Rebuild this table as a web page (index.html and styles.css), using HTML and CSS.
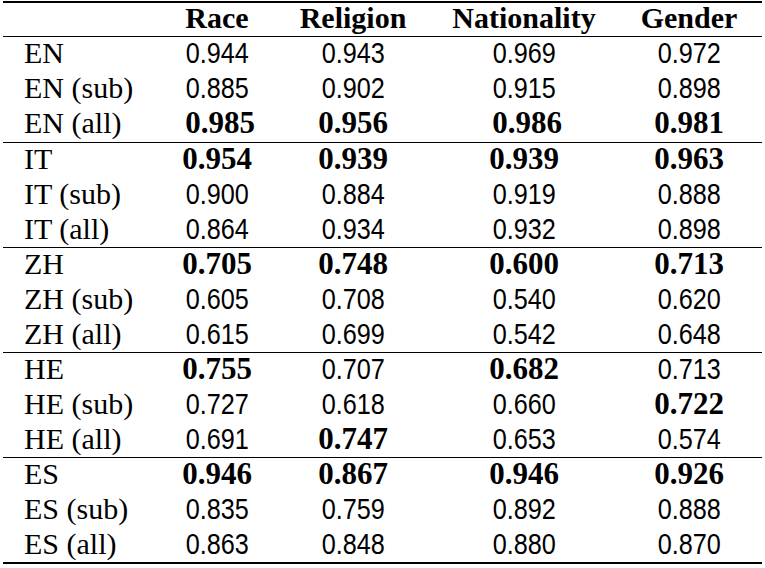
FILE: index.html
```html
<!DOCTYPE html>
<html lang="en">
<head>
<meta charset="utf-8">
<title>Results table</title>
<link rel="stylesheet" href="styles.css">
</head>
<body>
<div class="table">
  <div class="row head">
    <div class="lab"></div>
    <div class="c b">Race</div>
    <div class="c b">Religion</div>
    <div class="c b">Nationality</div>
    <div class="c b">Gender</div>
  </div>

  <div class="group first">
    <div class="row"><div class="lab">EN</div><div class="c"><span class="n">0.944</span></div><div class="c"><span class="n">0.943</span></div><div class="c"><span class="n">0.969</span></div><div class="c"><span class="n">0.972</span></div></div>
    <div class="row"><div class="lab">EN (sub)</div><div class="c"><span class="n">0.885</span></div><div class="c"><span class="n">0.902</span></div><div class="c"><span class="n">0.915</span></div><div class="c"><span class="n">0.898</span></div></div>
    <div class="row"><div class="lab">EN (all)</div><div class="c b shift">0.985</div><div class="c b">0.956</div><div class="c b shift">0.986</div><div class="c b">0.981</div></div>
  </div>

  <div class="group">
    <div class="row"><div class="lab">IT</div><div class="c b">0.954</div><div class="c b">0.939</div><div class="c b">0.939</div><div class="c b">0.963</div></div>
    <div class="row"><div class="lab">IT (sub)</div><div class="c"><span class="n">0.900</span></div><div class="c"><span class="n">0.884</span></div><div class="c"><span class="n">0.919</span></div><div class="c"><span class="n">0.888</span></div></div>
    <div class="row"><div class="lab">IT (all)</div><div class="c"><span class="n">0.864</span></div><div class="c"><span class="n">0.934</span></div><div class="c"><span class="n">0.932</span></div><div class="c"><span class="n">0.898</span></div></div>
  </div>

  <div class="group">
    <div class="row"><div class="lab">ZH</div><div class="c b">0.705</div><div class="c b">0.748</div><div class="c b">0.600</div><div class="c b">0.713</div></div>
    <div class="row"><div class="lab">ZH (sub)</div><div class="c"><span class="n">0.605</span></div><div class="c"><span class="n">0.708</span></div><div class="c"><span class="n">0.540</span></div><div class="c"><span class="n">0.620</span></div></div>
    <div class="row"><div class="lab">ZH (all)</div><div class="c"><span class="n">0.615</span></div><div class="c"><span class="n">0.699</span></div><div class="c"><span class="n">0.542</span></div><div class="c"><span class="n">0.648</span></div></div>
  </div>

  <div class="group">
    <div class="row"><div class="lab">HE</div><div class="c b">0.755</div><div class="c"><span class="n">0.707</span></div><div class="c b">0.682</div><div class="c"><span class="n">0.713</span></div></div>
    <div class="row"><div class="lab">HE (sub)</div><div class="c"><span class="n">0.727</span></div><div class="c"><span class="n">0.618</span></div><div class="c"><span class="n">0.660</span></div><div class="c b">0.722</div></div>
    <div class="row"><div class="lab">HE (all)</div><div class="c"><span class="n">0.691</span></div><div class="c b">0.747</div><div class="c"><span class="n">0.653</span></div><div class="c"><span class="n">0.574</span></div></div>
  </div>

  <div class="group last">
    <div class="row"><div class="lab">ES</div><div class="c b">0.946</div><div class="c b">0.867</div><div class="c b">0.946</div><div class="c b">0.926</div></div>
    <div class="row"><div class="lab">ES (sub)</div><div class="c"><span class="n">0.835</span></div><div class="c"><span class="n">0.759</span></div><div class="c"><span class="n">0.892</span></div><div class="c"><span class="n">0.888</span></div></div>
    <div class="row"><div class="lab">ES (all)</div><div class="c"><span class="n">0.863</span></div><div class="c"><span class="n">0.848</span></div><div class="c"><span class="n">0.880</span></div><div class="c"><span class="n">0.870</span></div></div>
  </div>
</div>
</body>
</html>
```

FILE: styles.css
```css
html, body {
  margin: 0;
  padding: 0;
  background: #ffffff;
}

body {
  color: #000000;
  font-family: "Liberation Serif", "Times New Roman", serif;
  font-size: 30px;
}

.table {
  width: 759px;
  margin: 1px 0 0 3px;
  border-top: 2px solid #000;
}

.row {
  display: grid;
  grid-template-columns: 147px 134px 138px 204px 126px 10px;
  align-items: baseline;
  height: 35px;
  line-height: 31px;
  white-space: nowrap;
}

.row.head {
  height: 33px;
  line-height: 29px;
  border-bottom: 1px solid #000;
}

.group {
  border-bottom: 1px solid #000;
}

.group:not(.first) .row:last-child {
  height: 34px;
}

.group.last {
  border-bottom: 2px solid #000;
}

.lab {
  padding-left: 21px;
}

.c {
  text-align: center;
}

.b {
  font-weight: bold;
  font-size: 31px;
}

.row.head .b {
  font-size: 30px;
}

.n {
  display: inline-block;
  font-family: "Liberation Sans", Arial, sans-serif;
  font-size: 29px;
  transform: scaleX(0.87);
}

.shift {
  padding-left: 6px;
}
```
